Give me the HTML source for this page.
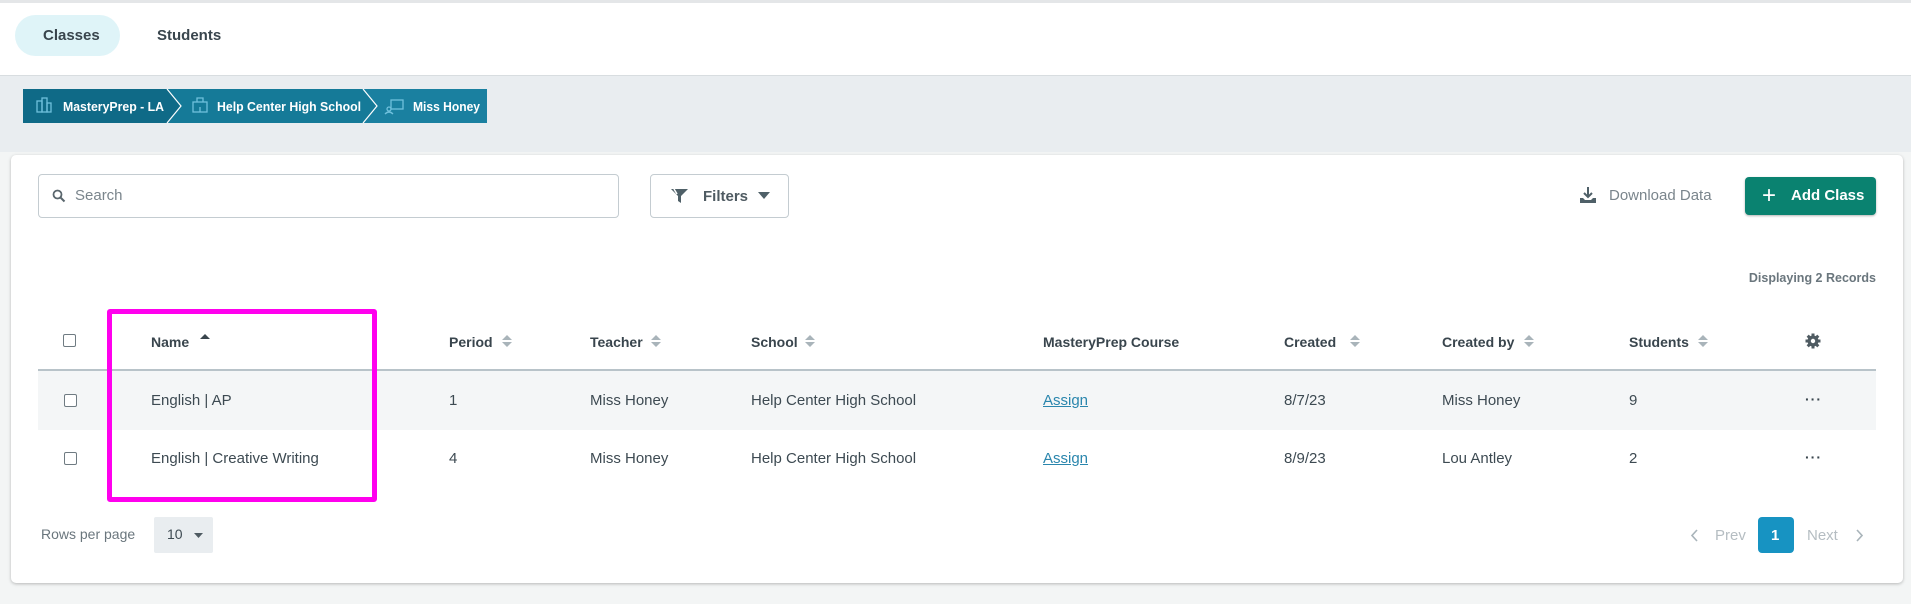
<!DOCTYPE html>
<html><head><meta charset="utf-8"><style>
*{box-sizing:border-box;margin:0;padding:0}
body{width:1911px;height:604px;overflow:hidden;background:#f3f5f5;font-family:"Liberation Sans",sans-serif;color:#3d4a52;position:relative}
.abs{position:absolute}
.hdr{left:0;top:0;width:1911px;height:76px;background:#fff;border-top:3px solid #e4e6e8;border-bottom:1px solid #d8dde0}
.band{left:0;top:76px;width:1911px;height:76px;background:#e9edf0}
.t{position:absolute;white-space:nowrap;font-size:15px;color:#3d4a52}
.b{font-weight:bold;font-size:14px;color:#39454d}
.card{left:11px;top:155px;width:1892px;height:428px;background:#fff;border-radius:5px;box-shadow:0 1px 3px rgba(0,0,0,.25)}
.cb{position:absolute;width:13px;height:13px;border:1.5px solid #6f7b82;border-radius:2px;background:#fff}
.sort{position:absolute;width:10px;height:14px}
</style></head><body>
<div class="abs hdr"></div>
<div class="abs" style="left:15px;top:15px;width:105px;height:41px;border-radius:21px;background:#dff4f8"></div>
<div class="t b" style="left:43px;top:27px;font-size:15px">Classes</div>
<div class="t b" style="left:157px;top:27px;font-size:15px">Students</div>
<div class="abs band"></div>
<svg class="abs" style="left:23px;top:89px" width="466" height="35">
<polygon points="0,0 144,0 158,17 144,34 0,34" fill="#0f6a87"/>
<polygon points="144,0 340,0 354,17 340,34 144,34 158,17" fill="#157a98"/>
<polygon points="340,0 464,0 464,34 340,34 354,17" fill="#1a80a0"/>
<polyline points="144,0 158,17 144,34" fill="none" stroke="#fff" stroke-width="1.2"/>
<polyline points="340,0 354,17 340,34" fill="none" stroke="#fff" stroke-width="1.2"/>
<g fill="none" stroke="#6fc0dc" stroke-width="1.3"><rect x="14" y="12" width="5" height="11"/><rect x="19" y="9" width="5" height="14"/><rect x="24" y="14" width="4" height="9"/>
<rect x="170" y="13" width="14" height="10"/><path d="M174 13v-4h6v4M177 18v5"/>
<rect x="368" y="11" width="12" height="9"/><circle cx="366" cy="20" r="2"/><path d="M362 25q4-4 8 0"/></g>
<text x="40" y="22" fill="#fff" font-size="13" font-weight="bold" font-family="Liberation Sans" textLength="101" lengthAdjust="spacingAndGlyphs">MasteryPrep - LA</text>
<text x="194" y="22" fill="#fff" font-size="13" font-weight="bold" font-family="Liberation Sans" textLength="144" lengthAdjust="spacingAndGlyphs">Help Center High School</text>
<text x="390" y="22" fill="#fff" font-size="13" font-weight="bold" font-family="Liberation Sans" textLength="67" lengthAdjust="spacingAndGlyphs">Miss Honey</text>
</svg>
<div class="abs card"></div>
<div class="abs" style="left:38px;top:174px;width:581px;height:44px;border:1px solid #c4ccd1;border-radius:4px;background:#fff"></div>
<svg class="abs" style="left:52px;top:189px" width="14" height="14"><circle cx="5.5" cy="5.5" r="4" fill="none" stroke="#5a666d" stroke-width="1.8"/><path d="M8.5 8.5l4 4" stroke="#5a666d" stroke-width="2"/></svg>
<div class="t" style="left:75px;top:187px;color:#7a858c">Search</div>
<div class="abs" style="left:650px;top:174px;width:139px;height:44px;border:1px solid #c4ccd1;border-radius:4px;background:#fff"></div>
<svg class="abs" style="left:670px;top:188px" width="20" height="16"><path d="M1 1h17l-7 7v7l-3-2v-5z" fill="#4f6068"/><path d="M4 1l3 5" stroke="#fff" stroke-width="1.5"/></svg>
<div class="t b" style="left:703px;top:188px;color:#4f5b62;font-size:15px">Filters</div>
<svg class="abs" style="left:758px;top:192px" width="12" height="8"><path d="M0 0h12l-6 7z" fill="#4f6068"/></svg>
<svg class="abs" style="left:1579px;top:186px" width="18" height="18"><path d="M9 1v10M5 7l4 4 4-4" stroke="#4f6068" stroke-width="2" fill="none"/><path d="M1 12v5h16v-5l-3 0-2 2h-6l-2-2z" fill="#4f6068"/></svg>
<div class="t" style="left:1609px;top:187px;color:#7a858c">Download Data</div>
<div class="abs" style="left:1745px;top:177px;width:131px;height:38px;background:#0a8270;border-radius:4px;box-shadow:0 1px 2px rgba(0,0,0,.3)"></div>
<div class="t" style="left:1762px;top:184px;color:#fff;font-size:24px;line-height:24px">+</div>
<div class="t b" style="left:1791px;top:187px;color:#fff;font-size:15px">Add Class</div>
<div class="t" style="right:35px;top:271px;font-size:12.5px;font-weight:bold;color:#6a767d">Displaying 2 Records</div>
<div class="abs" style="left:38px;top:369px;width:1838px;height:2px;background:#b8c3c9"></div>
<div class="abs" style="left:38px;top:371px;width:1838px;height:59px;background:#f4f6f7"></div>
<div class="cb" style="left:63px;top:334px"></div>
<div class="cb" style="left:64px;top:394px"></div>
<div class="cb" style="left:64px;top:452px"></div>
<div class="t b" style="left:151px;top:334px">Name</div>
<svg class="abs" style="left:200px;top:333px" width="10" height="7"><path d="M0 6l5-5 5 5z" fill="#39454d"/></svg>
<div class="t b" style="left:449px;top:334px">Period</div>
<div class="t b" style="left:590px;top:334px">Teacher</div>
<div class="t b" style="left:751px;top:334px">School</div>
<div class="t b" style="left:1043px;top:334px">MasteryPrep Course</div>
<div class="t b" style="left:1284px;top:334px">Created</div>
<div class="t b" style="left:1442px;top:334px">Created by</div>
<div class="t b" style="left:1629px;top:334px">Students</div>
<svg width="0" height="0" style="position:absolute"><defs><g id="s"><path d="M0 6l5-5 5 5zM0 8l5 5 5-5z" fill="#a9b4ba"/></g></defs></svg>
<svg class="sort" style="left:502px;top:334px"><use href="#s"/></svg>
<svg class="sort" style="left:651px;top:334px"><use href="#s"/></svg>
<svg class="sort" style="left:805px;top:334px"><use href="#s"/></svg>
<svg class="sort" style="left:1350px;top:334px"><use href="#s"/></svg>
<svg class="sort" style="left:1524px;top:334px"><use href="#s"/></svg>
<svg class="sort" style="left:1698px;top:334px"><use href="#s"/></svg>
<svg class="abs" style="left:1805px;top:333px" width="16" height="16" viewBox="0 0 16 16"><g fill="#4f5b62"><circle cx="8" cy="8" r="5.5"/><rect x="6.5" y="0.5" width="3" height="15"/><rect x="0.5" y="6.5" width="15" height="3"/><rect x="6.5" y="0.5" width="3" height="15" transform="rotate(45 8 8)"/><rect x="6.5" y="0.5" width="3" height="15" transform="rotate(-45 8 8)"/></g><circle cx="8" cy="8" r="2.2" fill="#fff"/></svg>
<div class="t" style="left:151px;top:392px">English | AP</div>
<div class="t" style="left:449px;top:392px">1</div>
<div class="t" style="left:590px;top:392px">Miss Honey</div>
<div class="t" style="left:751px;top:392px">Help Center High School</div>
<div class="t" style="left:1043px;top:392px;color:#2a86ad;text-decoration:underline">Assign</div>
<div class="t" style="left:1284px;top:392px">8/7/23</div>
<div class="t" style="left:1442px;top:392px">Miss Honey</div>
<div class="t" style="left:1629px;top:392px">9</div>
<div class="t b" style="left:1805px;top:391px;letter-spacing:1px">···</div>
<div class="t" style="left:151px;top:450px">English | Creative Writing</div>
<div class="t" style="left:449px;top:450px">4</div>
<div class="t" style="left:590px;top:450px">Miss Honey</div>
<div class="t" style="left:751px;top:450px">Help Center High School</div>
<div class="t" style="left:1043px;top:450px;color:#2a86ad;text-decoration:underline">Assign</div>
<div class="t" style="left:1284px;top:450px">8/9/23</div>
<div class="t" style="left:1442px;top:450px">Lou Antley</div>
<div class="t" style="left:1629px;top:450px">2</div>
<div class="t b" style="left:1805px;top:449px;letter-spacing:1px">···</div>
<div class="abs" style="left:107px;top:309px;width:270px;height:193px;border:5px solid #ff00ee;border-radius:3px"></div>
<div class="t" style="left:41px;top:526px;font-size:14px;color:#6a767d">Rows per page</div>
<div class="abs" style="left:154px;top:517px;width:59px;height:36px;background:#e9edf0;border-radius:2px"></div>
<div class="t" style="left:167px;top:526px;font-size:14px">10</div>
<svg class="abs" style="left:194px;top:533px" width="9" height="6"><path d="M0 0h9l-4.5 5z" fill="#4f5b62"/></svg>
<svg class="abs" style="left:1691px;top:529px" width="8" height="13"><path d="M6 1L1 6.5 6 12" stroke="#a9b4ba" stroke-width="1.6" fill="none"/></svg>
<div class="t" style="left:1715px;top:527px;color:#b5bdc2">Prev</div>
<div class="abs" style="left:1758px;top:517px;width:36px;height:36px;background:#1793c2;border-radius:4px"></div>
<div class="t" style="left:1771px;top:527px;color:#fff;font-weight:bold">1</div>
<div class="t" style="left:1807px;top:527px;color:#b5bdc2">Next</div>
<svg class="abs" style="left:1855px;top:529px" width="8" height="13"><path d="M2 1l5 5.5L2 12" stroke="#a9b4ba" stroke-width="1.6" fill="none"/></svg>
</body></html>
